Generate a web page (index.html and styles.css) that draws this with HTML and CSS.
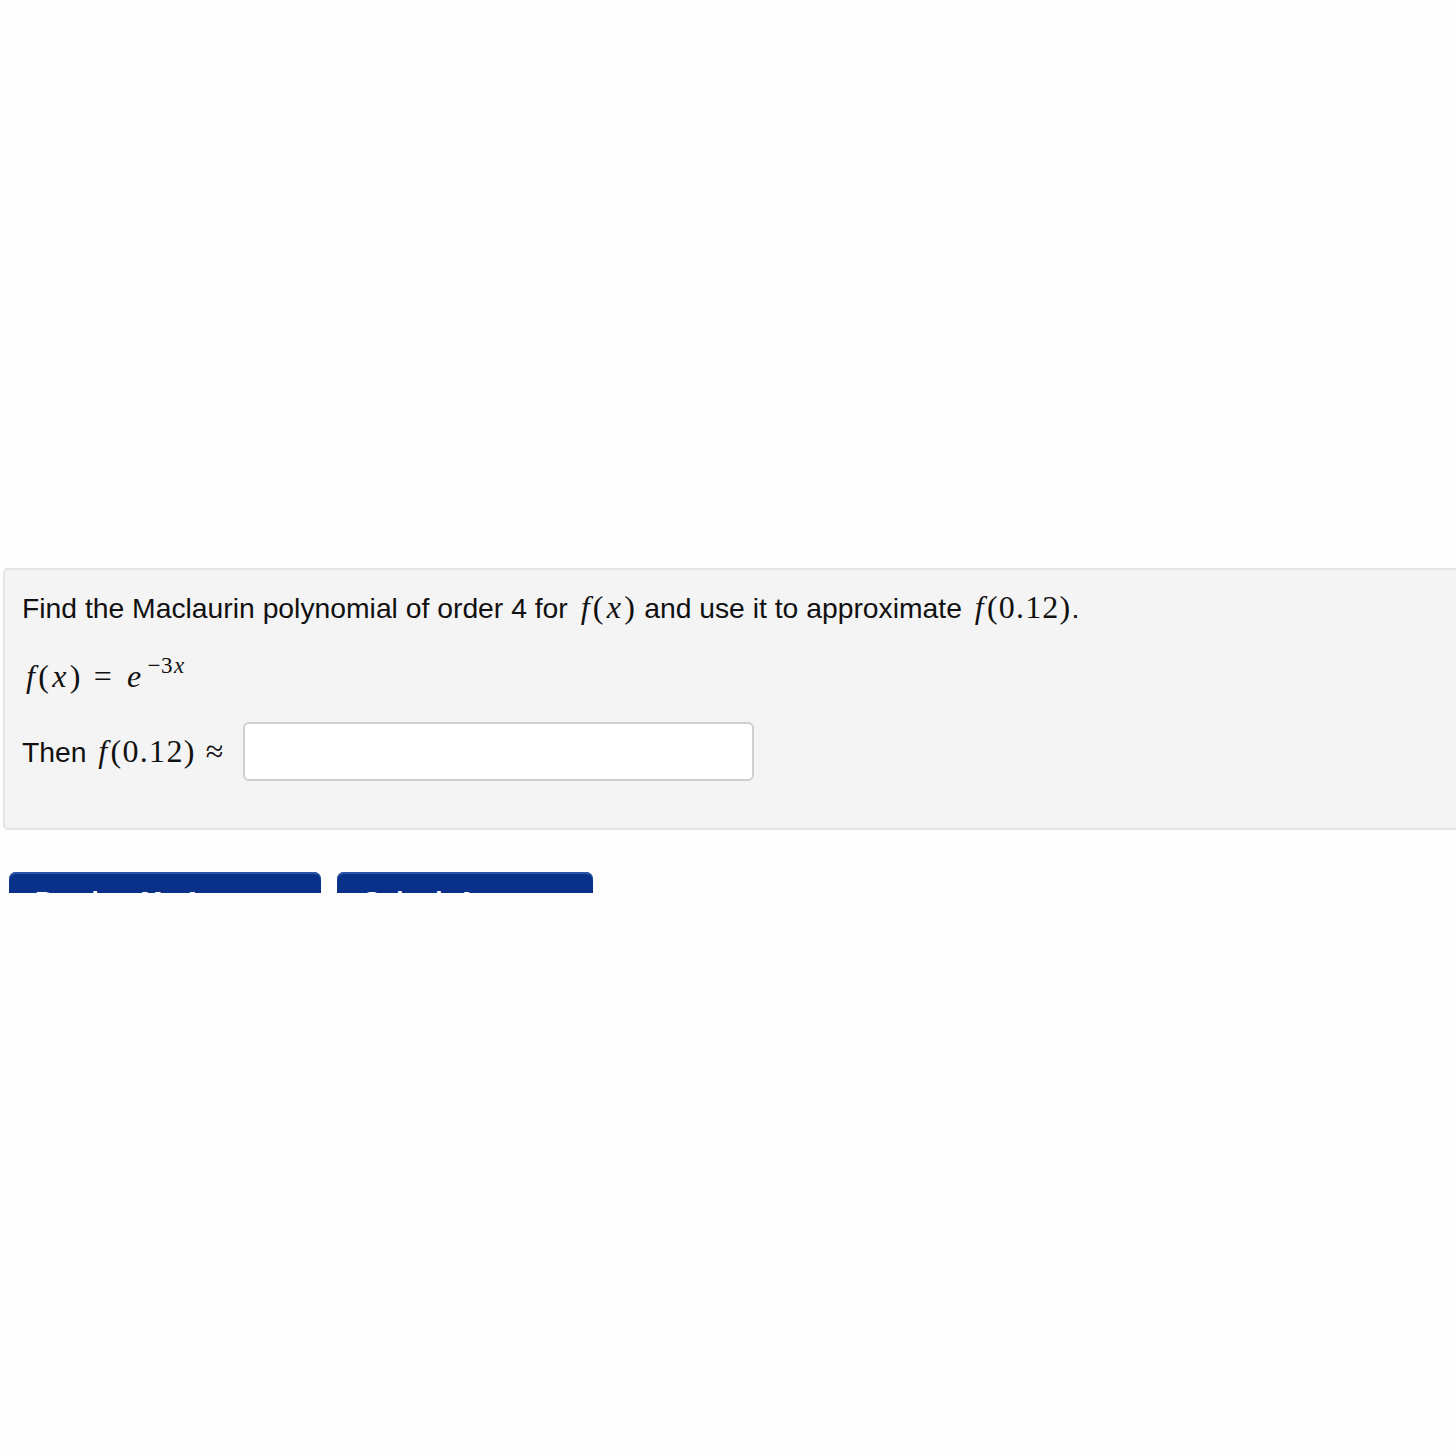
FILE: index.html
```html
<!DOCTYPE html>
<html>
<head>
<meta charset="utf-8">
<link rel="stylesheet" href="styles.css">
</head>
<body>
<div class="page">
  <div class="well">
    <p class="line first">Find the Maclaurin polynomial of order 4 for <span class="math"><i>f</i>(<i>x</i>)</span> and use it to approximate <span class="math wide"><i>f</i>(0.12)</span>.</p>
    <p class="line second"><span class="math"><i>f</i>(<i>x</i>)<span class="op">=</span><i>e</i><sup>−3<i>x</i></sup></span></p>
    <div class="answer-row">
      <span class="label">Then <span class="math"><i>f</i>(0.12)<span class="op approx">≈</span></span></span>
      <span class="input"></span>
    </div>
  </div>
  <div class="buttons">
    <button class="btn preview">Preview My Answers</button>
    <button class="btn submit">Submit Answers</button>
  </div>
</div>
</body>
</html>
```

FILE: styles.css
```css
html, body {
  margin: 0;
  padding: 0;
  background: #fdfdfd;
}
.page {
  height: 893px;
  overflow: hidden;
  font-family: "Liberation Sans", Arial, sans-serif;
  font-size: 28.3px;
  color: #111;
}
.well {
  margin: 568px -40px 0 3px;
  padding: 15px 17px 0;
  background: #f4f4f4;
  border: 2px solid #e4e4e4;
  border-radius: 5px;
  height: 262px;
  box-sizing: border-box;
}
.line {
  margin: 0;
  line-height: 44px;
}
.second {
  margin-top: 24px;
}
.math {
  font-family: "Liberation Serif", "Times New Roman", serif;
  font-size: 32px;
  letter-spacing: 1.3px;
  margin-left: 2px;
}
.first .math {
  margin-left: 3px;
}
.first .wide {
  letter-spacing: 1.2px;
}
.math i {
  font-style: italic;
  padding: 0 2px;
}
.op {
  padding: 0 12px;
}
.op.approx {
  padding: 0 0 0 10px;
  letter-spacing: 0;
}
sup {
  font-size: 23px;
  vertical-align: 14px;
  line-height: 0;
  letter-spacing: 0.5px;
  margin-left: 3px;
}
sup i {
  padding: 0 1px !important;
}
.answer-row {
  display: flex;
  align-items: center;
  margin-top: 23px;
  gap: 20px;
}
.input {
  display: block;
  width: 511px;
  height: 59px;
  box-sizing: border-box;
  background: #fff;
  border: 2px solid #cfcfcf;
  border-radius: 6px;
}
.buttons {
  display: flex;
  gap: 16px;
  margin: 42px 0 0 9px;
}
.btn {
  height: 50px;
  border: none;
  border-radius: 7px;
  background: #0a3189;
  color: #fff;
  font-family: "Liberation Sans", Arial, sans-serif;
  font-size: 26px;
  font-weight: bold;
  padding: 7px 26px 0;
  text-align: left;
  line-height: 30px;
  box-shadow: inset 0 2px 0 #2a56a8;
}
.preview { width: 312px; }
.submit { width: 256px; }
```
